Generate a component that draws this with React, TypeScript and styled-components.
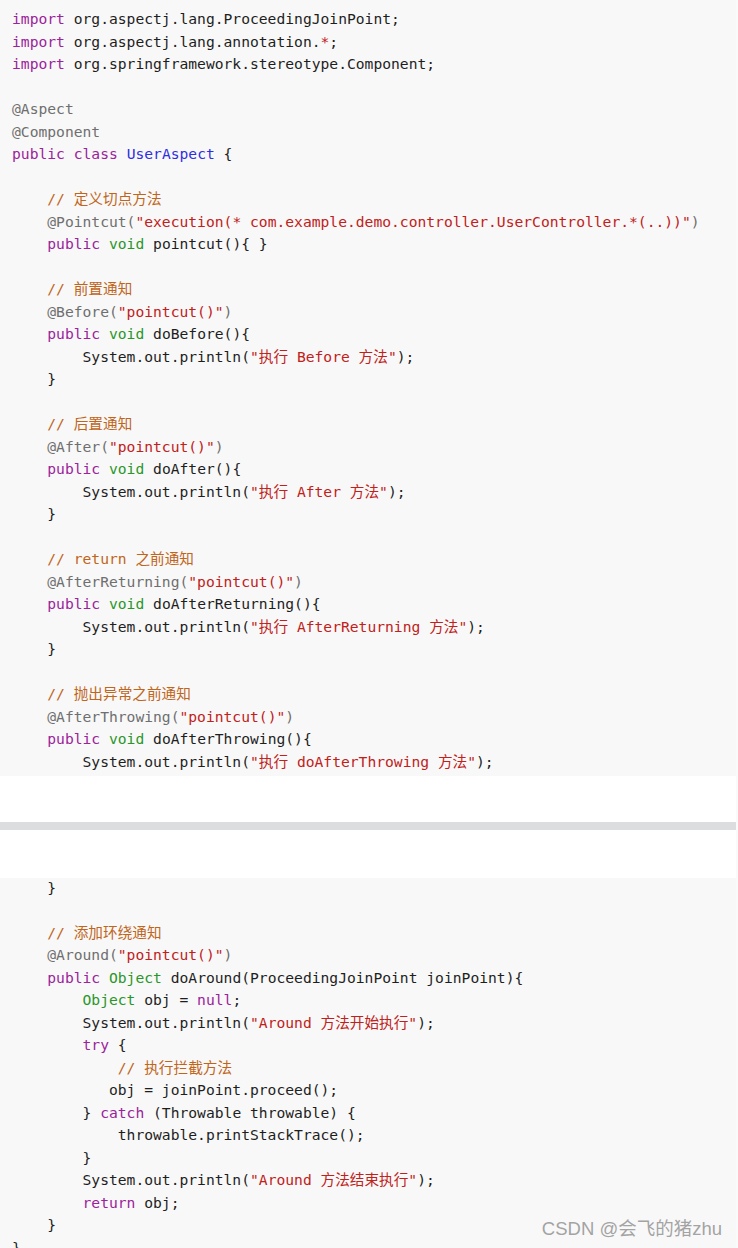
import React from "react";
import styled, { createGlobalStyle } from "styled-components";

type Kind = "pl" | "kw" | "ty" | "ti" | "st" | "cm" | "me";
type Tok = [Kind, string];
type Line = Tok[];

const colors: Record<Kind, string> = {
  pl: "#1e1e1e",
  kw: "#9b239b",
  ty: "#2a962a",
  ti: "#2f2fe0",
  st: "#c0211a",
  cm: "#c0651a",
  me: "#6f6f6f",
};

const GlobalStyle = createGlobalStyle`
  html, body {
    margin: 0;
    padding: 0;
    background: #ffffff;
  }
  body {
    font-family: "Liberation Sans", "Noto Sans CJK SC", sans-serif;
    overflow: hidden;
  }
`;

const Page = styled.div`
  display: flex;
  flex-direction: column;
  width: 738px;
  height: 1248px;
  overflow: hidden;
  box-sizing: border-box;
  border-right: 2px solid rgba(0, 0, 0, 0.02);
`;

const CodeBlock = styled.pre<{ $top: number; $bottom: number; $height?: number }>`
  position: relative;
  margin: 0;
  padding: ${(p) => p.$top}px 0 ${(p) => p.$bottom}px 12px;
  background: #f8f8f8;
  font-family: "DejaVu Sans Mono", "Noto Sans CJK SC", monospace;
  font-size: 14.65px;
  line-height: 22.5px;
  color: ${colors.pl};
  white-space: pre;
  overflow: hidden;
  flex-shrink: 0;
  ${(p) => (p.$height ? `height: ${p.$height}px; box-sizing: border-box;` : "")}
`;

const Lines = styled.div<{ $shift: number }>`
  display: flex;
  flex-direction: column;
  margin-top: ${(p) => p.$shift}px;
`;

const CodeLine = styled.div`
  height: 22.5px;
  white-space: pre;
`;

const Token = styled.span<{ $kind: Kind }>`
  color: ${(p) => colors[p.$kind]};
`;

const Gap = styled.div<{ $h: number }>`
  height: ${(p) => p.$h}px;
  flex-shrink: 0;
`;

const Divider = styled.div`
  height: 8px;
  background: #dcdddf;
  flex-shrink: 0;
`;

const Watermark = styled.div`
  position: absolute;
  right: 14px;
  top: 342px;
  font-family: "Liberation Sans", "Noto Sans CJK SC", sans-serif;
  font-size: 18.5px;
  line-height: 18px;
  color: #a3a3a3;
  text-shadow: 0 0 1px rgba(255, 255, 255, 0.8);
  white-space: nowrap;
`;

const I1 = "    ";
const I2 = "        ";

const ann = (name: string): Line => [
  ["pl", I1],
  ["me", `@${name}(`],
  ["st", '"pointcut()"'],
  ["me", ")"],
];
const method = (name: string): Line => [
  ["pl", I1],
  ["kw", "public"],
  ["pl", " "],
  ["ty", "void"],
  ["pl", ` ${name}(){`],
];
const print = (msg: string): Line => [
  ["pl", `${I2}System.out.println(`],
  ["st", `"${msg}"`],
  ["pl", ");"],
];
const comment = (text: string, indent = I1): Line => [
  ["pl", indent],
  ["cm", text],
];
const plain = (text: string): Line => [["pl", text]];
const blank: Line = [];

const block1: Line[] = [
  [["kw", "import"], ["pl", " org.aspectj.lang.ProceedingJoinPoint;"]],
  [["kw", "import"], ["pl", " org.aspectj.lang.annotation."], ["st", "*"], ["pl", ";"]],
  [["kw", "import"], ["pl", " org.springframework.stereotype.Component;"]],
  blank,
  [["me", "@Aspect"]],
  [["me", "@Component"]],
  [["kw", "public"], ["pl", " "], ["kw", "class"], ["pl", " "], ["ti", "UserAspect"], ["pl", " {"]],
  blank,
  comment("// 定义切点方法"),
  [
    ["pl", I1],
    ["me", "@Pointcut("],
    ["st", '"execution(* com.example.demo.controller.UserController.*(..))"'],
    ["me", ")"],
  ],
  [["pl", I1], ["kw", "public"], ["pl", " "], ["ty", "void"], ["pl", " pointcut(){ }"]],
  blank,
  comment("// 前置通知"),
  ann("Before"),
  method("doBefore"),
  print("执行 Before 方法"),
  plain(`${I1}}`),
  blank,
  comment("// 后置通知"),
  ann("After"),
  method("doAfter"),
  print("执行 After 方法"),
  plain(`${I1}}`),
  blank,
  comment("// return 之前通知"),
  ann("AfterReturning"),
  method("doAfterReturning"),
  print("执行 AfterReturning 方法"),
  plain(`${I1}}`),
  blank,
  comment("// 抛出异常之前通知"),
  ann("AfterThrowing"),
  method("doAfterThrowing"),
  print("执行 doAfterThrowing 方法"),
];

const block2: Line[] = [
  plain(`${I1}}`),
  blank,
  comment("// 添加环绕通知"),
  ann("Around"),
  [
    ["pl", I1],
    ["kw", "public"],
    ["pl", " "],
    ["ty", "Object"],
    ["pl", " doAround(ProceedingJoinPoint joinPoint){"],
  ],
  [["pl", I2], ["ty", "Object"], ["pl", " obj = "], ["kw", "null"], ["pl", ";"]],
  print("Around 方法开始执行"),
  [["pl", I2], ["kw", "try"], ["pl", " {"]],
  comment("// 执行拦截方法", "            "),
  plain("           obj = joinPoint.proceed();"),
  [["pl", `${I2}} `], ["kw", "catch"], ["pl", " (Throwable throwable) {"]],
  plain("            throwable.printStackTrace();"),
  plain(`${I2}}`),
  print("Around 方法结束执行"),
  [["pl", I2], ["kw", "return"], ["pl", " obj;"]],
  plain(`${I1}}`),
  plain("}"),
];

const renderLines = (lines: Line[]) =>
  lines.map((line, i) => (
    <CodeLine key={i}>
      {line.length === 0
        ? " "
        : line.map(([kind, text], j) => (
            <Token key={j} $kind={kind}>
              {text}
            </Token>
          ))}
    </CodeLine>
  ));

export default function App() {
  return (
    <>
      <GlobalStyle />
      <Page>
        <CodeBlock $top={8} $bottom={3}>
          <Lines $shift={0}>{renderLines(block1)}</Lines>
        </CodeBlock>
        <Gap $h={46} />
        <Divider />
        <Gap $h={48} />
        <CodeBlock $top={0} $bottom={0} $height={370}>
          <Lines $shift={-1.25}>{renderLines(block2)}</Lines>
          <Watermark>CSDN @会飞的猪zhu</Watermark>
        </CodeBlock>
      </Page>
    </>
  );
}
